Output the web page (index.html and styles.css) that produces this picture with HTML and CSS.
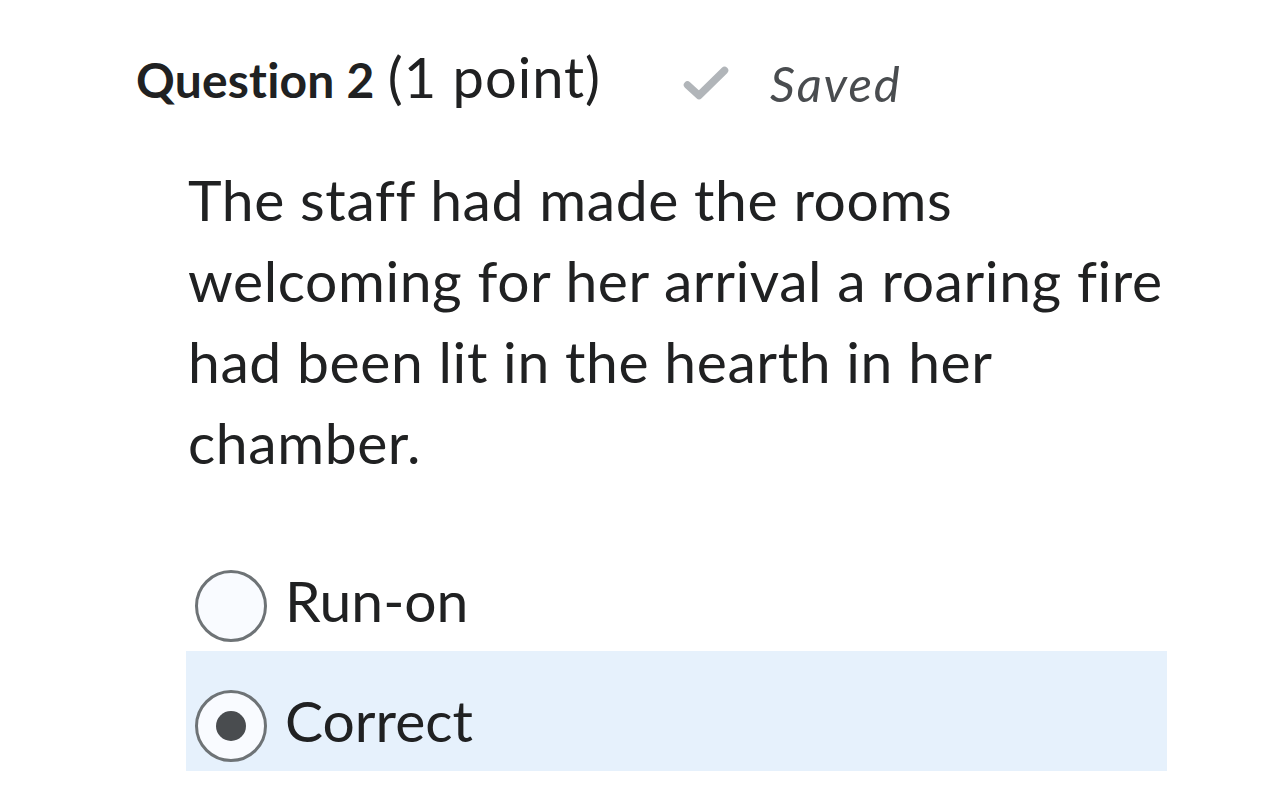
FILE: index.html
```html
<!DOCTYPE html>
<html>
<head>
<meta charset="utf-8">
<link rel="stylesheet" href="styles.css">
</head>
<body>
<div class="page">
  <div class="q-header">
    <h2 class="q-title"><strong>Question 2</strong> <span class="pts">(1 point)</span></h2>
    <div class="saved">
      <svg class="check" width="46" height="34" viewBox="0 0 46 34"><path d="M4.5 19 L16 29.5 L41.5 4.5" fill="none" stroke="#b1b5b9" stroke-width="7.5" stroke-linecap="round" stroke-linejoin="round"/></svg>
      <span class="saved-text">Saved</span>
    </div>
  </div>
  <div class="q-body">
    <p class="prompt">The staff had made the rooms welcoming for her arrival a roaring fire had been lit in the hearth in her chamber.</p>
    <div class="options">
      <label class="option">
        <span class="radio"></span>
        <span class="opt-text">Run-on</span>
      </label>
      <label class="option selected">
        <span class="radio"><span class="dot"></span></span>
        <span class="opt-text">Correct</span>
      </label>
    </div>
  </div>
</div>
</body>
</html>
```
FILE: styles.css
```css
html, body {
  margin: 0;
  padding: 0;
  background: #ffffff;
}
body {
  font-family: Lato, "Noto Sans", sans-serif;
  color: #202122;
  font-variant-ligatures: none;
  font-feature-settings: "liga" 0, "clig" 0;
}
.page {
  padding: 49px 0 0 136px;
}
.q-header {
  display: flex;
  align-items: center;
  height: 58px;
}
.q-title {
  margin: 0;
  font-size: 48px;
  line-height: 58px;
  font-weight: 400;
  color: #202122;
  white-space: nowrap;
}
.q-title strong {
  font-weight: 700;
  letter-spacing: 0.2px;
}
.pts {
  font-size: 56px;
  letter-spacing: 1px;
  margin-left: 1px;
}
.saved {
  display: flex;
  align-items: center;
  margin-left: 82px;
  margin-top: 10px;
}
.check {
  display: block;
}
.saved-text {
  font-style: italic;
  font-size: 49px;
  letter-spacing: 1.9px;
  color: #494c4f;
  margin-left: 41px;
}
.q-body {
  margin-left: 50px;
  width: 981px;
}
.prompt {
  margin: 52px 0 0 2px;
  font-size: 57px;
  line-height: 81px;
  letter-spacing: 0.6px;
  color: #202122;
}
.options {
  margin-top: 48px;
}
.option {
  display: flex;
  align-items: center;
  height: 120px;
  box-sizing: border-box;
  padding-top: 30px;
}
.option.selected {
  background: #e6f1fc;
}
.radio {
  width: 72px;
  height: 72px;
  flex: none;
  box-sizing: border-box;
  border: 3px solid #6e7376;
  border-radius: 50%;
  background: #f9fbff;
  margin-left: 9px;
  display: flex;
  align-items: center;
  justify-content: center;
}
.dot {
  width: 30px;
  height: 30px;
  border-radius: 50%;
  background: #494c4f;
}
.opt-text {
  font-size: 57px;
  margin-left: 18px;
  padding-bottom: 12px;
  color: #202122;
}
```
